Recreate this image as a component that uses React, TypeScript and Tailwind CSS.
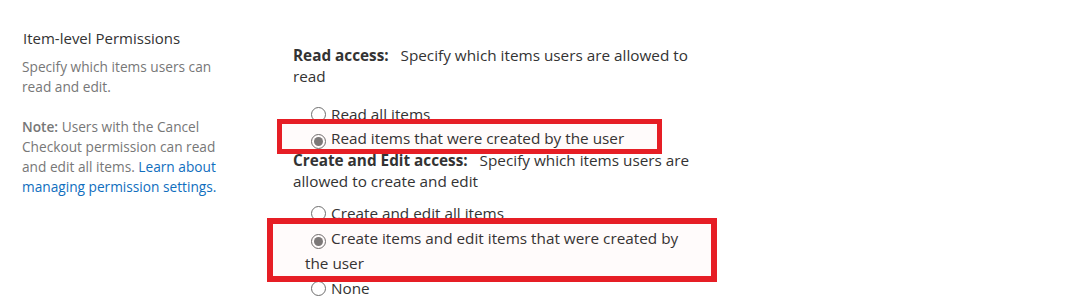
import React from 'react'

function Radio({ checked }: { checked?: boolean }) {
  return (
    <span className="inline-flex items-center justify-center w-[15px] h-[15px] rounded-full border border-[#6e6e6e] bg-white align-[-2px] ml-[6px] mr-[5px]">
      {checked && <span className="w-[9px] h-[9px] rounded-full bg-[#7a7a7a]" />}
    </span>
  )
}

function Option({ checked, children }: { checked?: boolean; children: React.ReactNode }) {
  return (
    <div className="pl-[12px] pr-[20px]">
      <Radio checked={checked} />
      {children}
    </div>
  )
}

export default function App() {
  return (
    <div className="relative w-[1082px] h-[307px] bg-white flex font-['Open_Sans',sans-serif] overflow-hidden">
      {/* left description */}
      <div className="w-[293px] pl-[22px] pt-[28px] shrink-0">
        <h3 className="text-[15px] leading-[20px] text-[#333] pl-[1px]">Item-level Permissions</h3>
        <p className="mt-[9px] w-[205px] text-[13.7px] leading-[20px] text-[#777]">
          Specify which items users can read and edit.
        </p>
        <p className="mt-[20px] w-[205px] text-[13.7px] leading-[20px] text-[#777]">
          <b className="font-semibold">Note:</b> Users with the Cancel Checkout permission can read and edit all items.{' '}
          <a className="text-[#106ebe]">Learn about managing permission settings.</a>
        </p>
      </div>

      {/* options */}
      <div className="w-[412px] pt-[45px] text-[15.3px] text-[#333]">
        <p className="leading-[21px]">
          <b className="font-bold">Read access:</b>&nbsp;&nbsp; Specify which items users are allowed to read
        </p>
        <div className="mt-[15px] leading-[24px]">
          <Option>Read all items</Option>
          <Option checked>Read items that were created by the user</Option>
        </div>
        <p className="leading-[21px]">
          <b className="font-bold">Create and Edit access:</b>&nbsp;&nbsp; Specify which items users are allowed to create and edit
        </p>
        <div className="mt-[9px] leading-[25px]">
          <Option>Create and edit all items</Option>
          <Option checked>Create items and edit items that were created by the user</Option>
          <Option>None</Option>
        </div>
      </div>

      {/* annotation boxes */}
      <div className="absolute left-[277px] top-[119px] w-[385px] h-[35px] border-[5px] border-[#e61e25] bg-[rgba(230,30,37,0.02)]" />
      <div className="absolute left-[267px] top-[218px] w-[450px] h-[64px] border-[6px] border-[#e61e25] bg-[rgba(230,30,37,0.02)]" />
    </div>
  )
}
